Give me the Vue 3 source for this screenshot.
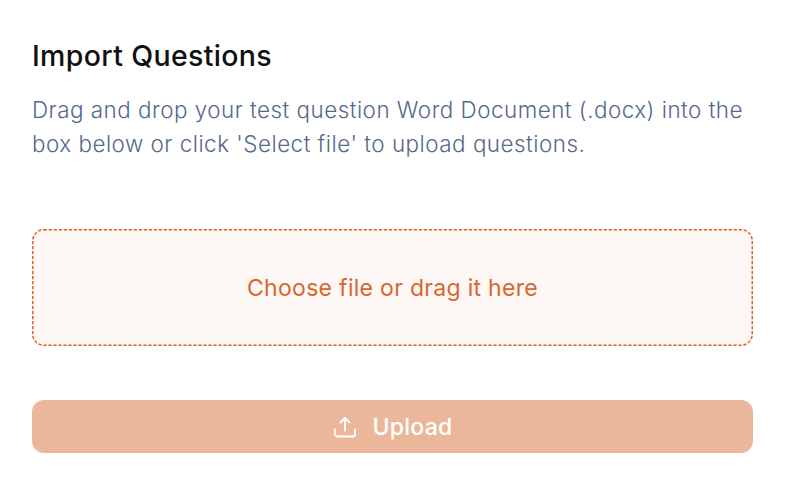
<template>
  <div class="import-panel">
    <h2>Import Questions</h2>
    <p class="hint">
      Drag and drop your test question Word Document (.docx) into the<br />
      box below or click 'Select file' to upload questions.
    </p>

    <div class="dropzone">
      <svg class="dash" viewBox="0 0 721 117" fill="none">
        <rect x="0.75" y="0.75" width="719.5" height="115.5" rx="11" stroke="#dd6128" stroke-width="1.5" stroke-dasharray="3.2 1.8" />
      </svg>
      Choose file or drag it here
    </div>

    <button class="upload-btn" type="button">
      <svg width="24" height="24" viewBox="0 0 24 24" fill="none" stroke="currentColor" stroke-width="2" stroke-linecap="round" stroke-linejoin="round">
        <path d="M2 14.5v4.5a2.5 2.5 0 0 0 2.5 2.5h15a2.5 2.5 0 0 0 2.5-2.5v-4.5" />
        <path d="M12 15.5V3" />
        <path d="M7.5 7.5L12 3l4.5 4.5" />
      </svg>
      <span>Upload</span>
    </button>
  </div>
</template>

<script setup>
</script>

<style scoped>
.import-panel {
  box-sizing: border-box;
  width: 785px;
  height: 492px;
  padding: 40px 32px 0;
  background: #fff;
  font-family: Inter, "Liberation Sans", sans-serif;
}

h2 {
  margin: 0;
  font-size: 28.5px;
  line-height: 32px;
  font-weight: 500;
  letter-spacing: 0.35px;
  color: #101010;
}

.hint {
  margin: 21px 0 0;
  font-size: 22.4px;
  line-height: 34px;
  font-weight: 300;
  letter-spacing: 0.5px;
  color: #55698a;
  white-space: nowrap;
}

.dropzone {
  position: relative;
  display: flex;
  align-items: center;
  justify-content: center;
  box-sizing: border-box;
  height: 117px;
  margin-top: 68px;
  border-radius: 12px;
  background: #fdf8f5;
  color: #d8662f;
  font-size: 23px;
  font-weight: 400;
  letter-spacing: 0.3px;
}

.dash {
  position: absolute;
  inset: 0;
  width: 100%;
  height: 100%;
}

.upload-btn {
  display: flex;
  align-items: center;
  justify-content: center;
  gap: 15px;
  width: 100%;
  height: 53px;
  margin-top: 54px;
  padding: 0 0 0 1px;
  border: none;
  border-radius: 12px;
  background: #ebb79b;
  color: #fff;
  font-family: inherit;
  font-size: 23px;
  font-weight: 500;
  letter-spacing: 0.3px;
}
</style>
